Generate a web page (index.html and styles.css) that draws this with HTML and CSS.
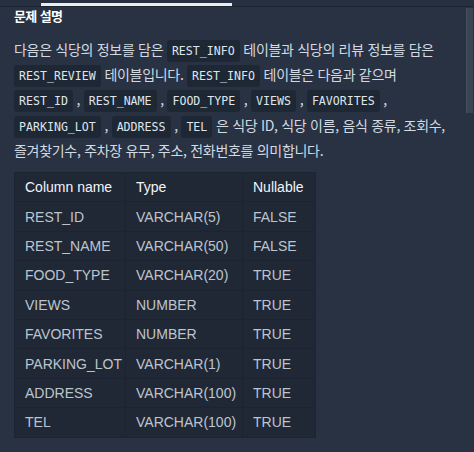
FILE: index.html
```html
<!DOCTYPE html>
<html lang="ko">
<head>
<meta charset="utf-8">
<link rel="stylesheet" href="styles.css">
</head>
<body>
<div class="app">
  <div class="tabs"><div class="tab-active"></div></div>
  <div class="panel">
    <div class="content">
      <h2 class="title">문제 설명</h2>
      <p class="desc">다음은 식당의 정보를 담은 <code>REST_INFO</code> 테이블과 식당의 리뷰 정보를 담은<br><code>REST_REVIEW</code> 테이블입니다. <code>REST_INFO</code> 테이블은 다음과 같으며<br><code>REST_ID</code> , <code>REST_NAME</code> , <code>FOOD_TYPE</code> , <code>VIEWS</code> , <code>FAVORITES</code> ,<br><code>PARKING_LOT</code> , <code>ADDRESS</code> , <code>TEL</code> 은 식당 ID, 식당 이름, 음식 종류, 조회수,<br>즐겨찾기수, 주차장 유무, 주소, 전화번호를 의미합니다.</p>
      <table class="schema">
        <colgroup><col class="c1"><col class="c2"><col class="c3"></colgroup>
        <thead>
          <tr><th>Column name</th><th>Type</th><th>Nullable</th></tr>
        </thead>
        <tbody>
          <tr><td>REST_ID</td><td>VARCHAR(5)</td><td>FALSE</td></tr>
          <tr><td>REST_NAME</td><td>VARCHAR(50)</td><td>FALSE</td></tr>
          <tr><td>FOOD_TYPE</td><td>VARCHAR(20)</td><td>TRUE</td></tr>
          <tr><td>VIEWS</td><td>NUMBER</td><td>TRUE</td></tr>
          <tr><td>FAVORITES</td><td>NUMBER</td><td>TRUE</td></tr>
          <tr><td>PARKING_LOT</td><td>VARCHAR(1)</td><td>TRUE</td></tr>
          <tr><td>ADDRESS</td><td>VARCHAR(100)</td><td>TRUE</td></tr>
          <tr><td>TEL</td><td>VARCHAR(100)</td><td>TRUE</td></tr>
        </tbody>
      </table>
    </div>
    <div class="scroll-track"><div class="scroll-thumb"></div></div>
  </div>
</div>
</body>
</html>
```

FILE: styles.css
```css
html, body {
  margin: 0;
  padding: 0;
  background: #283242;
}
.app {
  width: 474px;
  height: 452px;
  overflow: hidden;
  display: flex;
  flex-direction: column;
  background: #283242;
}
.tabs {
  height: 6px;
  border-bottom: 1px solid #1d2531;
  background: #263040;
  flex: none;
}
.tab-active {
  margin: 3px 0 0 41px;
  width: 191px;
  height: 3px;
  background: #e9eef3;
}
.panel {
  flex: 1;
  display: flex;
  min-height: 0;
}
.content {
  flex: 1;
  padding: 0 0 0 14px;
  min-width: 0;
}
.title {
  margin: 0;
  font-family: "Noto Sans CJK KR", sans-serif;
  font-size: 13px;
  font-weight: 700;
  line-height: 18px;
  color: #ffffff;
  letter-spacing: -0.6px;
}
.desc {
  margin: 12px 0 0;
  font-family: "Noto Sans CJK KR", sans-serif;
  font-size: 14px;
  line-height: 25.2px;
  color: #d3dae2;
  letter-spacing: -0.3px;
  white-space: nowrap;
}
.desc code {
  font-family: "DejaVu Sans Mono", monospace;
  font-size: 11.6px;
  line-height: 1;
  letter-spacing: 0;
  background: #1e2734;
  color: #dfe5ec;
  padding: 4px 5px;
  border-radius: 3px;
}
.schema {
  margin-top: 9px;
  border-collapse: collapse;
  table-layout: fixed;
  width: 301px;
  background: #202836;
  font-family: "Liberation Sans", Arial, sans-serif;
  font-size: 14px;
  border: 1px solid #1c2431;
}
.c1 { width: 111px; }
.c2 { width: 117px; }
.c3 { width: 73px; }
.schema th, .schema td {
  height: 28.4px;
  padding: 0 10px;
  text-align: left;
  border: 1px solid #1c2431;
  white-space: nowrap;
  overflow: hidden;
  font-weight: 400;
}
.schema th {
  color: #f2f5f8;
}
.schema td {
  color: #bcc5cf;
}
.scroll-track {
  width: 8px;
  flex: none;
}
.scroll-thumb {
  margin-top: 1px;
  width: 7px;
  height: 105px;
  background: #394456;
  border-left: 1px solid #454f60;
  box-sizing: border-box;
}
```
